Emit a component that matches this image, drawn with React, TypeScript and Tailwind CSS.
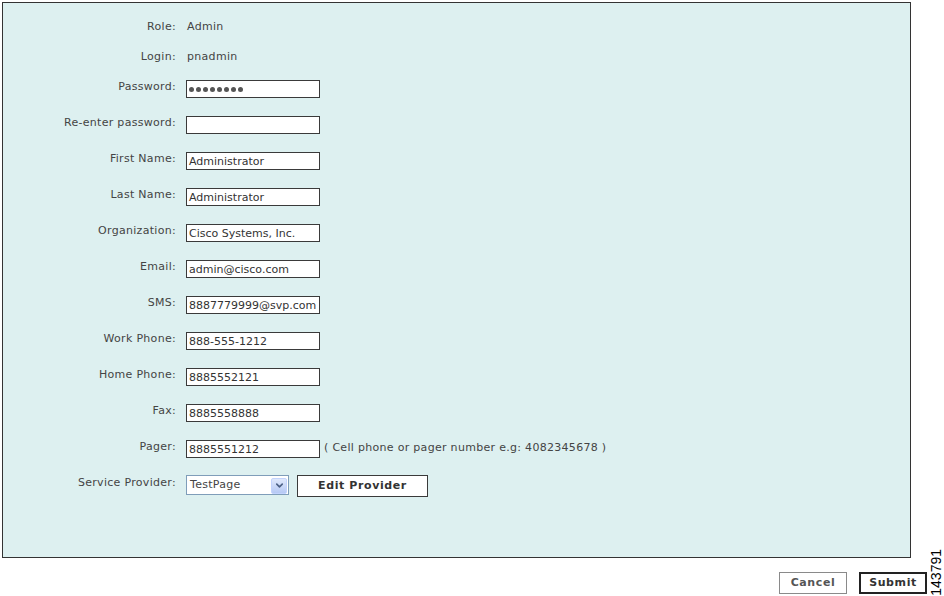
import { ChevronDown } from 'lucide-react';

const fields = [
  { label: 'First Name:', value: 'Administrator' },
  { label: 'Last Name:', value: 'Administrator' },
  { label: 'Organization:', value: 'Cisco Systems, Inc.' },
  { label: 'Email:', value: 'admin@cisco.com' },
  { label: 'SMS:', value: '8887779999@svp.com' },
  { label: 'Work Phone:', value: '888-555-1212' },
  { label: 'Home Phone:', value: '8885552121' },
  { label: 'Fax:', value: '8885558888' },
];

function Label({ children }: { children: React.ReactNode }) {
  return <div className="w-[173px] shrink-0 text-right leading-[14px]">{children}</div>;
}

function TextBox({ value }: { value: string }) {
  return (
    <div className="w-[134px] h-[18px] bg-white border border-[#3a3a3a] pl-[2px] pt-[2px] leading-[14px] overflow-hidden whitespace-nowrap text-[#333] tracking-normal">
      {value}
    </div>
  );
}

export default function App() {
  return (
    <div
      className="relative w-[944px] h-[596px] bg-white text-[11px] text-[#444] tracking-[0.3px]"
      style={{ fontFamily: '"DejaVu Sans", Verdana, sans-serif' }}
    >
      {/* 사용자 정보 패널 */}
      <div className="absolute left-[2px] top-[2px] w-[909px] h-[556px] bg-[#ddf0f0] border border-[#333] pt-[17px] flex flex-col">
        <div className="flex gap-[10px] h-[14px]">
          <Label>Role:</Label>
          <div className="pl-px leading-[14px]">Admin</div>
        </div>
        <div className="flex gap-[10px] h-[14px] mt-[16px]">
          <Label>Login:</Label>
          <div className="pl-px leading-[14px]">pnadmin</div>
        </div>
        <div className="flex gap-[10px] mt-[16px] h-[18px] items-start">
          <Label>Password:</Label>
          <div className="w-[134px] h-[18px] bg-white border border-[#3a3a3a] pl-[2px] pt-px flex items-center gap-[2px]">
            {Array.from({ length: 8 }).map((_, i) => (
              <span key={i} className="w-[5px] h-[5px] rounded-full bg-[#555]" />
            ))}
          </div>
        </div>
        <div className="flex gap-[10px] mt-[18px] h-[18px] items-start">
          <Label>Re-enter password:</Label>
          <TextBox value="" />
        </div>
        {fields.map((f) => (
          <div key={f.label} className="flex gap-[10px] mt-[18px] h-[18px] items-start">
            <Label>{f.label}</Label>
            <TextBox value={f.value} />
          </div>
        ))}
        <div className="flex gap-[10px] mt-[18px] h-[18px] items-start">
          <Label>Pager:</Label>
          <TextBox value="8885551212" />
          <div className="-ml-[6px] leading-[14px] mt-px">( Cell phone or pager number e.g: 4082345678 )</div>
        </div>
        <div className="flex gap-[10px] mt-[17px] items-start">
          <div className="w-[173px] shrink-0 text-right leading-[14px] pt-px">Service Provider:</div>
          <div className="w-[103px] h-[20px] bg-white border border-[#7f9db9] flex items-center justify-between pl-[3px] pr-px pt-px">
            <span>TestPage</span>
            <span className="w-[16px] h-[16px] bg-gradient-to-b from-[#dfe8fb] to-[#b6c9f4] border border-[#c3d3fd] rounded-[2px] flex items-center justify-center">
              <ChevronDown className="w-[11px] h-[11px] text-[#4d6185]" strokeWidth={3.5} />
            </span>
          </div>
          <button className="ml-[-2px] w-[131px] h-[22px] bg-white border border-[#3a3a3a] font-bold text-[#333] text-[11px] tracking-[0.6px]">
            Edit Provider
          </button>
        </div>
      </div>

      {/* 하단 버튼 */}
      <div className="absolute left-0 right-[17px] top-[572px] flex justify-end gap-[12px]">
        <button className="w-[68px] h-[22px] bg-white border border-[#8a8a8a] font-bold text-[#555] text-[11px] tracking-[0.6px]">
          Cancel
        </button>
        <button className="w-[68px] h-[22px] bg-white border-2 border-[#222] font-bold text-[#333] text-[11px] tracking-[0.6px]">
          Submit
        </button>
      </div>

      <div
        className="absolute right-[1px] bottom-[0px] [writing-mode:vertical-rl] rotate-180 text-[14px] leading-[14px] text-black tracking-normal"
        style={{ fontFamily: '"Liberation Sans", Arial, sans-serif' }}
      >
        143791
      </div>
    </div>
  );
}
